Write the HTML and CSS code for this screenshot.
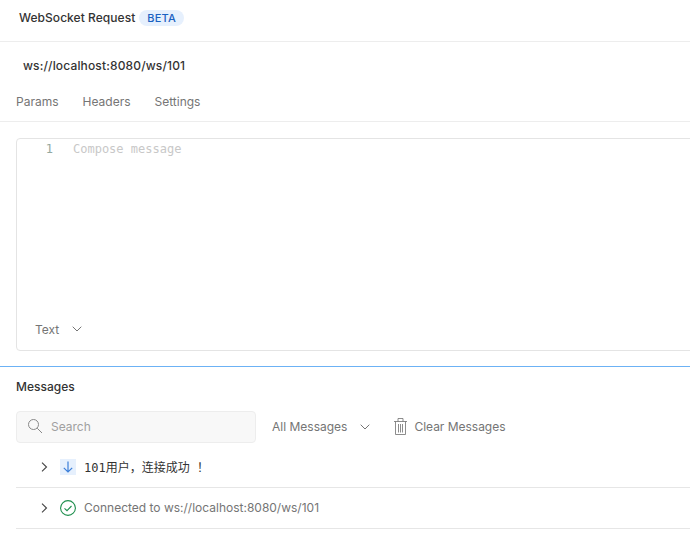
FILE: index.html
```html
<!DOCTYPE html>
<html lang="en">
<head>
<meta charset="utf-8">
<title>WebSocket Request</title>
<link rel="stylesheet" href="styles.css">
</head>
<body>
<header class="title-bar">
  <span class="title">WebSocket Request</span>
  <span class="badge">BETA</span>
</header>
<div class="url-row">ws://localhost:8080/ws/101</div>
<nav class="tabs">
  <span>Params</span>
  <span>Headers</span>
  <span>Settings</span>
</nav>
<section class="composer">
  <div class="editor-wrap">
    <div class="editor">
      <span class="line-no">1</span>
      <span class="placeholder">Compose message</span>
    </div>
    <div class="format">
      <span>Text</span>
      <svg class="chev" width="10" height="6" viewBox="0 0 10 6"><path d="M.7.7 5 5 9.3.7" fill="none" stroke="#757575" stroke-width="1"/></svg>
    </div>
  </div>
</section>
<section class="messages">
  <h2 class="messages-title">Messages</h2>
  <div class="toolbar">
    <div class="search">
      <svg width="16" height="16" viewBox="0 0 16 16"><circle cx="6.500" cy="6.500" r="5" fill="none" stroke="#888" stroke-width="1"/><path d="m10.200 10.200 4.800 4.800" stroke="#888" stroke-width="1"/></svg>
      <span>Search</span>
    </div>
    <div class="filter">
      <span>All Messages</span>
      <svg width="10" height="6" viewBox="0 0 10 6"><path d="M.7.7 5 5 9.3.7" fill="none" stroke="#757575" stroke-width="1"/></svg>
    </div>
    <div class="clear">
      <svg width="13" height="17" viewBox="0 0 13 17"><path d="M0 3.500h13M4 3.500V.5h5v3M1.500 3.500V16.500H11.500V3.500M4.500 6v8.500M6.500 6v8.500M8.500 6v8.500" fill="none" stroke="#707070" stroke-width=".8"/></svg>
      <span>Clear Messages</span>
    </div>
  </div>
  <div class="msg">
    <svg class="expand" width="7" height="10" viewBox="0 0 7 10"><path d="m1 .7 4.500 4.300L1 9.300" fill="none" stroke="#444" stroke-width="1.100"/></svg>
    <span class="icon-in"><svg width="10" height="12" viewBox="0 0 10 12"><path d="M5 .5v10.500M.8 6.800 5 11l4.200-4.200" fill="none" stroke="#3d7fd9" stroke-width="1.200"/></svg></span>
    <span class="msg-code">101用户，连接成功 ！</span>
  </div>
  <div class="msg">
    <svg class="expand" width="7" height="10" viewBox="0 0 7 10"><path d="m1 .7 4.500 4.300L1 9.300" fill="none" stroke="#444" stroke-width="1.100"/></svg>
    <svg class="icon-ok" width="16" height="16" viewBox="0 0 16 16"><circle cx="8" cy="8" r="7.400" fill="none" stroke="#1f8f4e" stroke-width="1.100"/><path d="m4.500 8.300 2.500 2.400 4.500-4.700" fill="none" stroke="#1f8f4e" stroke-width="1.100"/></svg>
    <span class="msg-text">Connected to ws://localhost:8080/ws/101</span>
  </div>
</section>
</body>
</html>
```
FILE: styles.css
```css
* { box-sizing: border-box; }
html, body { height: 100%; }
body {
  margin: 0;
  overflow: hidden;
  background: #fff;
  font-family: Inter, "Noto Sans CJK SC", sans-serif;
  font-size: 12px;
  color: #757575;
}
.title-bar {
  height: 42px;
  padding: 0 0 6px 19px;
  display: flex;
  align-items: center;
  gap: 4px;
  border-bottom: 1px solid #ededed;
}
.title { font-weight: 500; color: #333; letter-spacing: .05px; }
.badge {
  height: 16px;
  padding: 0 8px;
  border-radius: 8px;
  background: #e6f0fd;
  color: #1a62c2;
  font-size: 11px;
  font-weight: 500;
  letter-spacing: .2px;
  line-height: 16px;
}
.url-row {
  height: 48px;
  padding: 0 0 0 23px;
  line-height: 48px;
  font-weight: 500;
  letter-spacing: .15px;
  color: #333;
}
.tabs {
  height: 32px;
  padding: 0 16px 8px;
  display: flex;
  align-items: center;
  gap: 24px;
  border-bottom: 1px solid #ededed;
}
.composer { height: 245px; padding: 16px 0 16px 16px; border-bottom: 1px solid #6cb2f5; }
.editor-wrap {
  width: 700px;
  height: 213px;
  display: flex;
  flex-direction: column;
  justify-content: space-between;
  border: 1px solid #e4e4e4;
  border-radius: 4px;
}
.editor {
  display: flex;
  padding-top: 3px;
  font-family: "DejaVu Sans Mono", monospace;
  font-size: 12px;
  line-height: 15px;
}
.line-no { width: 36px; text-align: right; color: #93a8a0; }
.placeholder { margin-left: 20px; color: #c8c8c8; }
.format {
  display: flex;
  align-items: center;
  gap: 13px;
  height: 42px;
  padding: 0 0 0 18px;
}
.messages { padding: 0 0 0 16px; }
.messages-title {
  margin: 0;
  height: 44px;
  padding-top: 12px;
  font-size: 12px;
  line-height: 15px;
  font-weight: 500;
  color: #333;
}
.toolbar { display: flex; align-items: center; height: 32px; margin-bottom: 4px; }
.search {
  width: 240px;
  height: 32px;
  padding: 0 0 2px 10px;
  display: flex;
  align-items: center;
  gap: 8px;
  background: #f8f8f8;
  border: 1px solid #ededed;
  border-radius: 4px;
  color: #a0a0a0;
}
.filter { display: flex; align-items: center; gap: 13px; margin-left: 16px; padding-bottom: 1px; }
.clear { display: flex; align-items: center; gap: 7px; margin-left: 24px; padding-bottom: 1px; letter-spacing: -.02px; }
.msg {
  height: 41px;
  padding-left: 25px;
  display: flex;
  align-items: center;
  border-bottom: 1px solid #e6e6e6;
}
.icon-in {
  width: 16px;
  height: 16px;
  margin-left: 12px;
  display: flex;
  align-items: center;
  justify-content: center;
  background: #e6f0fd;
}
.icon-ok { margin-left: 12px; }
.msg-code {
  margin-left: 8px;
  padding-bottom: 2px;
  font-family: "DejaVu Sans Mono", "Noto Sans CJK SC", monospace;
  font-size: 12px;
  color: #333;
}
.msg-text { margin-left: 8px; padding-bottom: 2px; }
```
